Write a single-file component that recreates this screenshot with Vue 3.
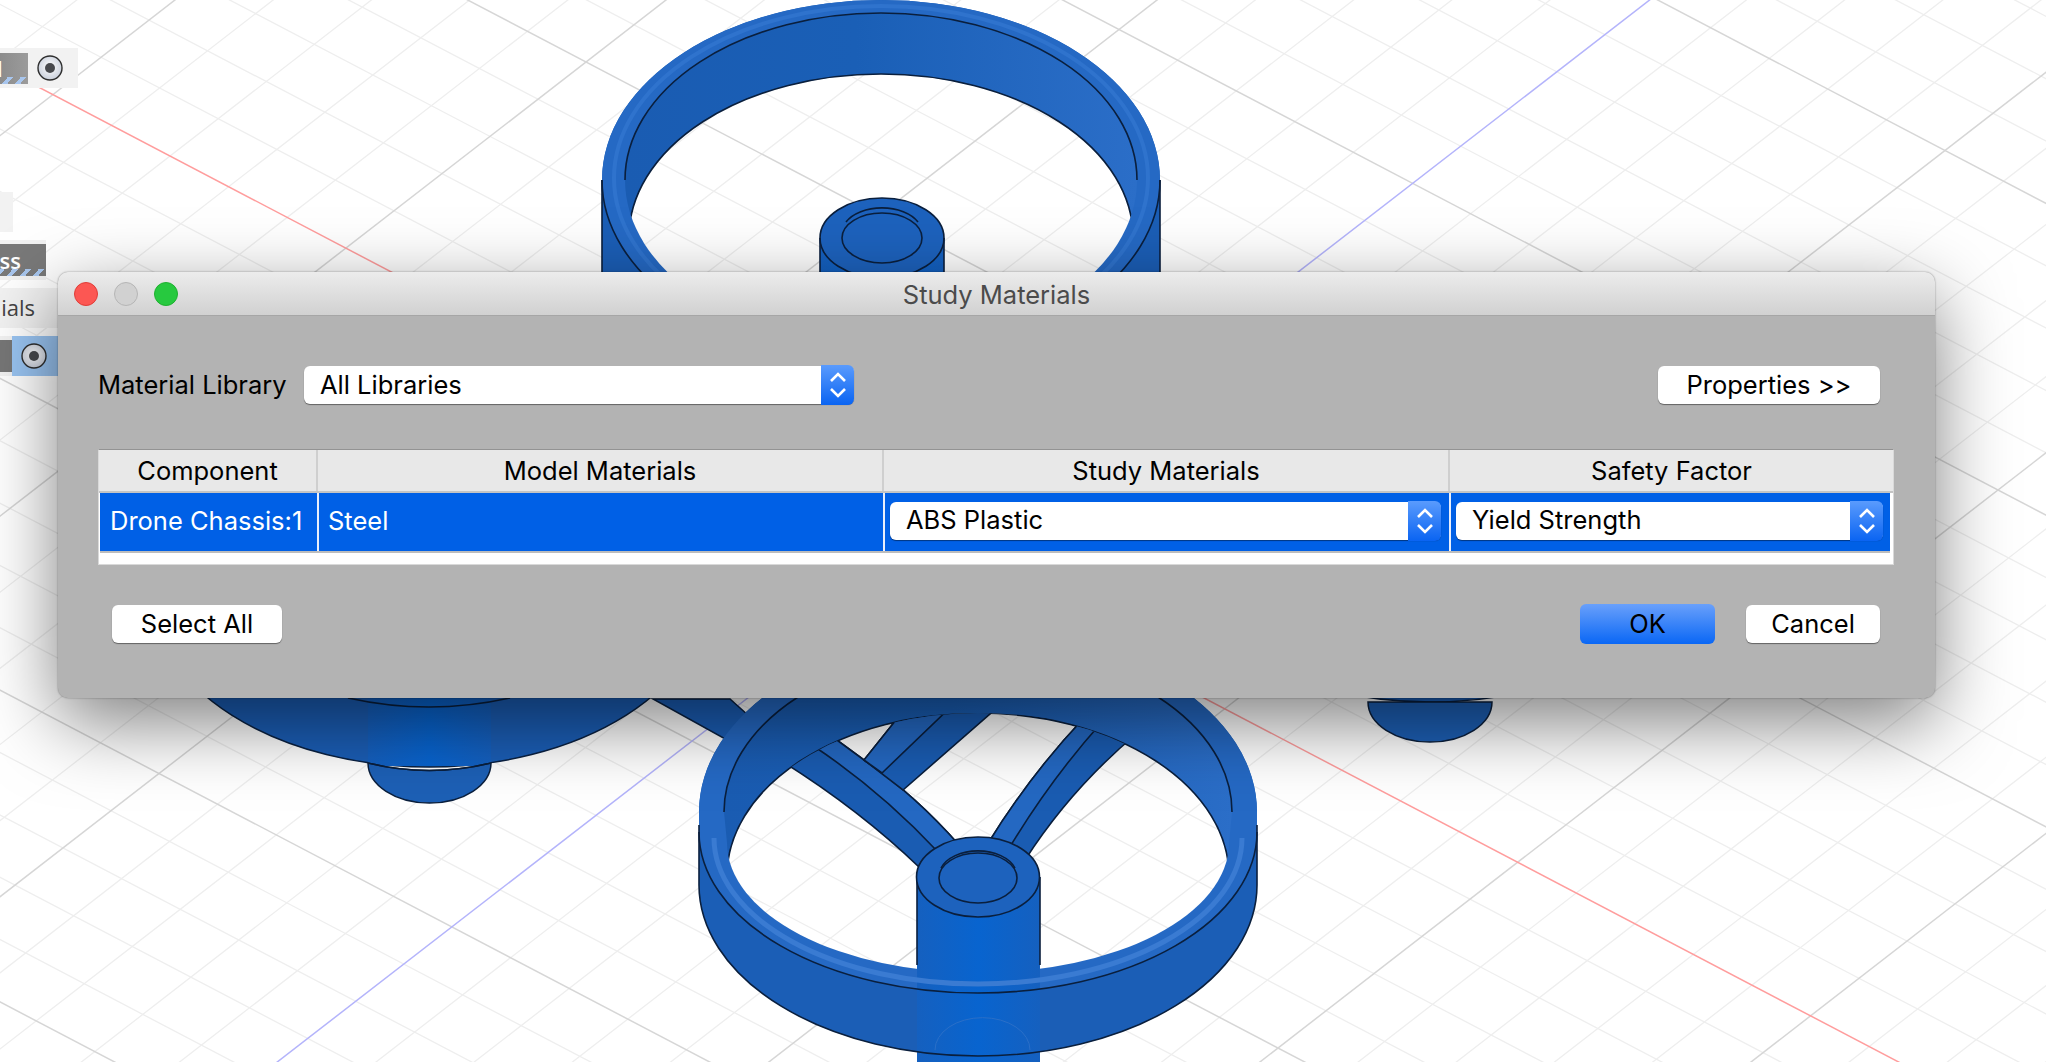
<script setup>
import { computed } from 'vue'

const origin = { x: 932, y: 555 }
const A = { x: 293, y: 153.5 }
const B = { x: 240, y: -186 }

const gridLines = computed(() => {
  const lines = []
  for (let i = -30; i <= 30; i++) {
    if (i !== 0) {
      const ox = origin.x + (B.x * i) / 5
      const oy = origin.y + (B.y * i) / 5
      lines.push({ key: 'u' + i, x1: ox - A.x * 8, y1: oy - A.y * 8, x2: ox + A.x * 8, y2: oy + A.y * 8, major: i % 5 === 0 })
      const px = origin.x + (A.x * i) / 5
      const py = origin.y + (A.y * i) / 5
      lines.push({ key: 'v' + i, x1: px - B.x * 8, y1: py - B.y * 8, x2: px + B.x * 8, y2: py + B.y * 8, major: i % 5 === 0 })
    }
  }
  return lines.sort((a, b) => Number(a.major) - Number(b.major))
})

const rows = [
  { study: 'ABS Plastic', safety: 'Yield Strength' }
]
</script>

<template>
  <div class="stage">
    <svg class="scene" width="2046" height="1062" viewBox="0 0 2046 1062">
      <defs>
        <linearGradient id="wall" x1="0" x2="1" y1="0" y2="0">
          <stop offset="0" stop-color="#1a5cb2" />
          <stop offset="0.45" stop-color="#1a5fb6" />
          <stop offset="1" stop-color="#2b6ec8" />
        </linearGradient>
        <linearGradient id="post" x1="0" x2="1" y1="0" y2="0">
          <stop offset="0" stop-color="#1560bf" />
          <stop offset="0.5" stop-color="#0864cf" />
          <stop offset="1" stop-color="#1560bf" />
        </linearGradient>
        <radialGradient id="knob" cx="0.5" cy="0.45" r="0.6">
          <stop offset="0" stop-color="#ffffff" />
          <stop offset="1" stop-color="#c4cbd8" />
        </radialGradient>
        <clipPath id="wallTop"><ellipse cx="881" cy="180" rx="256" ry="167" /></clipPath>
        <clipPath id="wallLow"><ellipse cx="978" cy="843" rx="251" ry="130" /></clipPath>
        <clipPath id="holeLow" clip-path="url(#wallLow)"><ellipse cx="978" cy="876" rx="251" ry="163" /></clipPath>
        <mask id="maskTop" maskUnits="userSpaceOnUse" x="0" y="-20" width="2046" height="1100">
          <rect x="0" y="-20" width="2046" height="1100" fill="#fff" />
          <ellipse cx="881" cy="237" rx="252" ry="163" fill="#000" clip-path="url(#wallTop)" />
        </mask>
        <mask id="maskLow" maskUnits="userSpaceOnUse" x="0" y="-20" width="2046" height="1100">
          <rect x="0" y="-20" width="2046" height="1100" fill="#fff" />
          <ellipse cx="978" cy="876" rx="251" ry="163" fill="#000" clip-path="url(#wallLow)" />
        </mask>
      </defs>

      <g class="grid">
        <line v-for="l in gridLines" :key="l.key" :x1="l.x1" :y1="l.y1" :x2="l.x2" :y2="l.y2" :class="l.major ? 'major' : 'minor'" />
      </g>
      <line class="axis-red" x1="-36" y1="48" x2="2160" y2="1199" />
      <line class="axis-blue" x1="2" y1="1275" x2="1700" y2="-39" />

      <!-- top ring -->
      <g mask="url(#maskTop)">
        <path class="shell" d="M602 180A279 180 0 0 1 1160 180L1160 290A279 180 0 0 1 602 290Z" />
        <ellipse class="rim" cx="881" cy="180" rx="279" ry="180" />
        <ellipse class="glow" cx="881" cy="178" rx="267" ry="172" />
        <ellipse cx="881" cy="180" rx="256" ry="167" fill="url(#wall)" />
        <path class="edge" d="M625 180A256 167 0 0 1 1137 180" />
        <path class="edge" d="M602 180A279 180 0 0 0 1160 180" />
        <path class="edge" d="M602 180V290M1160 180V290" />
      </g>
      <ellipse class="edge" cx="881" cy="237" rx="252" ry="163" clip-path="url(#wallTop)" />
      <rect x="820" y="238" width="124" height="50" fill="url(#post)" />
      <ellipse class="hub" cx="882" cy="238" rx="62" ry="40" />
      <path class="edge" d="M820 238V280M944 238V280" />
      <ellipse class="edge" cx="882" cy="238" rx="40" ry="25" />
      <path class="edge" d="M846 222A40 25 0 0 1 918 222" />

      <!-- left and right rings peeking out below the dialog -->
      <path class="body" d="M653 699L730 699L770 735L727 740Z" />
      <ellipse class="body" cx="429" cy="590" rx="279" ry="177" />
      <rect x="368" y="680" width="123" height="86" fill="url(#post)" />
      <path class="edge" d="M348 698Q429 716 510 698" />
      <path class="tip" d="M368 763A61.5 40 0 0 0 491 763Q429 778 368 763Z" />
      <path class="edge" d="M368 763Q429 778 491 763" />
      <ellipse class="body" cx="1430" cy="525" rx="279" ry="177" />
      <path class="tip" d="M1368 702A62 40 0 0 0 1492 702Z" />

      <!-- bottom ring -->
      <g mask="url(#maskLow)">
        <path class="shell" d="M699 812A279 180 0 0 1 1257 812L1257 885A279 171 0 0 1 699 885Z" />
        <path class="rim" d="M699 812A279 180 0 0 1 1257 812L1257 832A279 161 0 0 1 699 832Z" />
        <path fill="url(#wall)" d="M724 812A254 163 0 0 1 1232 812L1229 843A251 130 0 0 1 727 843Z" />
        <path class="edge" d="M724 812A254 163 0 0 1 1232 812" />
      </g>
      <ellipse class="edge" cx="978" cy="876" rx="251" ry="163" clip-path="url(#wallLow)" />
      <g clip-path="url(#holeLow)">
        <path class="arm" d="M780 760L826 732L864 760Q915 795 959 845L920 868Q860 810 780 760Z" />
        <path class="arm-light" d="M812 745L826 732L864 760Q915 795 959 845L938 852Q880 790 812 745Z" />
        <path class="arm" d="M864 760L912 700L1006 700L903 790Z" />
        <path class="arm-light" d="M864 760L912 700L958 700L882 773Z" />
        <path class="arm" d="M987 845Q1030 775 1084 718L1135 735Q1070 790 1025 860Z" />
        <path class="arm-light" d="M987 845Q1030 775 1084 718L1102 722Q1050 780 1008 850Z" />
      </g>
      <rect x="917" y="877" width="123" height="185" fill="url(#post)" />
      <path class="edge" d="M917 877V965M1040 877V965" />
      <ellipse class="hub" cx="978" cy="877" rx="61.5" ry="40" />
      <ellipse class="edge" cx="978" cy="878" rx="39" ry="25" />
      <path class="edge" d="M941 868A39 25 0 0 1 1015 868" />
      <path class="band" d="M714 838A264 146 0 0 0 1242 838" />
      <path class="edge" d="M699 832A279 161 0 0 0 1257 832" />
      <path class="edge" d="M699 825V885A279 171 0 0 0 1257 885V825" />
      <path class="faint" d="M935 1050A47 32 0 0 1 1030 1050" />
    </svg>

    <div class="side side-a">
      <div class="chip"><span class="chip-text chip-one">1</span><i class="hatch"></i></div>
      <svg class="radio" viewBox="0 0 26 26"><circle cx="13" cy="13" r="12" fill="url(#knob)" /><circle class="dot" cx="13" cy="13" r="5" /></svg>
    </div>
    <div class="side side-b"></div>
    <div class="side side-c">
      <div class="chip chip-dark"><span class="chip-text chip-ss">ss</span><i class="hatch"></i></div>
    </div>
    <div class="side side-d">ials</div>
    <div class="side side-e">
      <div class="chip chip-dark chip-stub"></div>
      <div class="active">
        <svg class="radio" viewBox="0 0 26 26"><circle cx="13" cy="13" r="12" fill="url(#knob)" /><circle class="dot" cx="13" cy="13" r="5" /></svg>
      </div>
    </div>

    <section class="window">
      <header class="titlebar">
        <div class="lights">
          <span class="light red"></span>
          <span class="light gray"></span>
          <span class="light green"></span>
        </div>
        <span class="title">Study Materials</span>
      </header>

      <div class="content">
        <div class="top-row">
          <label class="lib-label">Material Library</label>
          <div class="combo lib-combo">
            <span class="combo-text">All Libraries</span>
            <span class="combo-arrow">
              <svg viewBox="0 0 32 40" width="32" height="40"><path d="M9 16L16 9L23 16M9 24L16 31L23 24" /></svg>
            </span>
          </div>
          <button class="btn props">Properties &gt;&gt;</button>
        </div>

        <div class="table">
          <div class="thead">
            <div class="th">Component</div>
            <div class="th">Model Materials</div>
            <div class="th">Study Materials</div>
            <div class="th">Safety Factor</div>
          </div>
          <div v-for="row in rows" :key="row.study" class="tr">
            <div class="td name">Drone Chassis:1</div>
            <div class="td model">Steel</div>
            <div class="td holder">
              <div class="combo">
                <span class="combo-text">{{ row.study }}</span>
                <span class="combo-arrow">
                  <svg viewBox="0 0 32 40" width="32" height="40"><path d="M9 16L16 9L23 16M9 24L16 31L23 24" /></svg>
                </span>
              </div>
            </div>
            <div class="td holder last">
              <div class="combo">
                <span class="combo-text">{{ row.safety }}</span>
                <span class="combo-arrow">
                  <svg viewBox="0 0 32 40" width="32" height="40"><path d="M9 16L16 9L23 16M9 24L16 31L23 24" /></svg>
                </span>
              </div>
            </div>
          </div>
          <div class="tail"></div>
        </div>

        <div class="bottom-row">
          <button class="btn select">Select All</button>
          <button class="btn primary">OK</button>
          <button class="btn cancel">Cancel</button>
        </div>
      </div>
    </section>
  </div>
</template>

<style scoped>
.stage {
  position: relative;
  width: 2046px;
  height: 1062px;
  overflow: hidden;
  background: #fff;
  font-family: Inter, "Liberation Sans", sans-serif;
}
.scene { position: absolute; inset: 0; }
.grid line { fill: none; }
.minor { stroke: #eeeeee; stroke-width: 1.3; }
.major { stroke: #d6d6d6; stroke-width: 1.5; }
.axis-red { stroke: #ff9d9d; stroke-width: 1.5; }
.axis-blue { stroke: #b4b4fb; stroke-width: 1.5; }
.shell { fill: #1b5eb6; }
.body { fill: #1b5eb6; stroke: #0a2142; stroke-width: 1.5; }
.rim { fill: #2569c4; }
.glow { fill: none; stroke: #2f73cd; stroke-width: 4; }
.edge { fill: none; stroke: #0a1f3d; stroke-width: 1.6; }
.band { fill: none; stroke: #3a7bd2; stroke-width: 5; }
.faint { fill: none; stroke: #2a6fc8; stroke-width: 1; }
.hub { fill: #1d62bd; stroke: #0a1f3d; stroke-width: 1.6; }
.arm { fill: #1a5cb2; stroke: #0a1f3d; stroke-width: 1.6; }
.arm-light { fill: #2468c2; stroke: #0a1f3d; stroke-width: 1.6; }
.tip { fill: #1d60b6; stroke: #0a1f3d; stroke-width: 1.5; }

.side {
  position: absolute;
  left: 0;
  background: #f2f2f2;
  display: flex;
  align-items: center;
}
.side-a { top: 48px; width: 78px; height: 40px; }
.side-b { top: 192px; width: 13px; height: 40px; }
.side-c { top: 240px; width: 46px; height: 40px; align-items: flex-start; padding-top: 4px; box-sizing: border-box; }
.side-d {
  top: 288px;
  width: 58px;
  height: 40px;
  justify-content: flex-end;
  padding: 0 23px 2px 0;
  box-sizing: border-box;
  font-family: "Open Sans", sans-serif;
  font-size: 22px;
  color: #444;
}
.side-e { top: 336px; width: 58px; height: 40px; }
.chip {
  position: relative;
  width: 28px;
  height: 31px;
  overflow: hidden;
  background: linear-gradient(90deg, #8c8c8c, #9b9b9b);
  display: flex;
  justify-content: flex-end;
  align-items: center;
  flex: none;
}
.chip-dark { width: 46px; height: 32px; background: #797979; }
.chip-stub { width: 12px; height: 32px; background: #777; }
.chip-text {
  color: #fff;
  font-family: "Open Sans", sans-serif;
  font-size: 22px;
  font-weight: 600;
  white-space: nowrap;
}
.chip-one { margin-right: 23px; }
.chip-ss { margin-right: 25px; }
.hatch {
  position: absolute;
  left: 0;
  right: 0;
  bottom: 0;
  height: 7px;
  background: repeating-linear-gradient(-50deg, transparent 0 6px, #a8c6ee 6px 10px);
}
.radio { width: 26px; height: 26px; margin-left: 9px; flex: none; }
.radio circle { stroke: #2e2e2e; stroke-width: 1.4; }
.radio .dot { fill: #47494d; stroke: none; }
.active {
  width: 46px;
  height: 40px;
  background: #9ac5f3;
  display: flex;
  align-items: center;
}
.active .radio { margin-left: 9px; }

.window {
  position: absolute;
  left: 58px;
  top: 272px;
  width: 1877px;
  height: 426px;
  border-radius: 10px;
  background: #b3b3b3;
  box-shadow: 0 24px 75px rgba(0, 0, 0, 0.5), 0 0 2px rgba(0, 0, 0, 0.4);
  overflow: hidden;
  display: flex;
  flex-direction: column;
}
.titlebar {
  position: relative;
  height: 43px;
  flex: none;
  border-bottom: 1px solid #a6a6a6;
  background: linear-gradient(#ececec, #d1d1d1);
  display: flex;
  align-items: center;
  justify-content: center;
}
.lights {
  position: absolute;
  left: 16px;
  top: 10px;
  display: flex;
  gap: 16px;
}
.light {
  width: 24px;
  height: 24px;
  border-radius: 50%;
  box-sizing: border-box;
}
.red { background: #fc5753; border: 1px solid #df3d38; }
.gray { background: #d1d1d1; border: 1px solid #b5b5b5; }
.green { background: #27c93f; border: 1px solid #1fb030; }
.title {
  font-size: 25.5px;
  color: #4b4b4b;
  padding-top: 1px;
}
.content {
  flex: 1;
  padding: 49px 41px 0 40px;
  display: flex;
  flex-direction: column;
}
.top-row {
  display: flex;
  align-items: center;
  height: 39px;
  padding-right: 14px;
}
.lib-label {
  width: 206px;
  flex: none;
  font-size: 25.5px;
  color: #000;
  white-space: nowrap;
}
.combo {
  height: 38px;
  flex: 1;
  position: relative;
  display: flex;
  align-items: center;
  background: #fff;
  border-radius: 6px;
  box-shadow: 0 1px 1px rgba(0, 0, 0, 0.45);
  font-size: 25.5px;
  color: #000;
}
.lib-combo { flex: none; width: 550px; }
.combo-text { padding: 0 0 1px 16px; flex: 1; white-space: nowrap; }
.holder .combo-text { padding-bottom: 2px; }
.combo-arrow {
  width: 33px;
  height: 40px;
  flex: none;
  border-radius: 0 6px 6px 0;
  background: linear-gradient(#5a9bfd, #0a64f2);
  display: flex;
  align-items: center;
  justify-content: center;
}
.combo-arrow path { fill: none; stroke: #fff; stroke-width: 2.6; }
.btn {
  font-family: inherit;
  font-size: 25.5px;
  color: #000;
  height: 38px;
  padding: 0;
  border: none;
  background: #fff;
  border-radius: 6px;
  box-shadow: 0 1px 1px rgba(0, 0, 0, 0.45);
}
.props { width: 222px; margin-left: auto; }
.table {
  margin-top: 45px;
  height: 116px;
  box-sizing: border-box;
  border: 1px solid #d9d9d9;
  border-top: 1px solid #939393;
  background: #fff;
  display: flex;
  flex-direction: column;
}
.thead, .tr {
  display: grid;
  grid-template-columns: 217px 566px 566px 1fr;
  flex: none;
}
.thead {
  height: 41px;
  background: #e8e8e8;
  border-bottom: 2px solid #c4c4c4;
  box-sizing: content-box;
}
.th {
  display: flex;
  align-items: center;
  justify-content: center;
  font-size: 25.5px;
  color: #000;
  border-left: 2px solid #cfcfcf;
  padding-bottom: 1px;
}
.th:first-child { border-left: none; }
.tr {
  height: 58px;
  background: #0060e6;
  border-bottom: 2px solid #bdbdbd;
  margin: 0 3px 0 1px;
}
.td {
  display: flex;
  align-items: center;
  font-size: 25.5px;
  color: #fff;
  border-left: 2px solid #e8eefb;
  white-space: nowrap;
  padding-bottom: 4px;
}
.td:first-child { border-left: none; }
.name { padding-left: 10px; }
.model { padding-left: 9px; }
.holder { padding: 0 8px 3px 5px; }
.holder.last { padding-right: 7px; }
.tail { flex: 1; }
.bottom-row {
  margin-top: 39px;
  padding: 0 14px;
  display: flex;
  align-items: center;
}
.bottom-row .btn { padding-bottom: 2px; }
.select { width: 170px; }
.primary {
  width: 135px;
  height: 40px;
  margin-left: auto;
  background: linear-gradient(#69a0fb, #0a67f5);
  box-shadow: none;
}
.cancel { width: 134px; margin-left: 31px; }
</style>
